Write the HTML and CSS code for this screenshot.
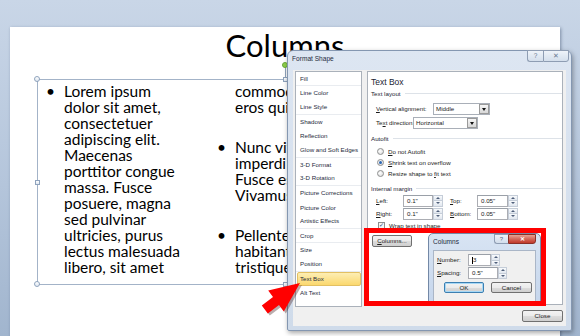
FILE: index.html
```html
<!DOCTYPE html>
<html>
<head>
<meta charset="utf-8">
<title>Columns</title>
<link rel="stylesheet" href="styles.css">
</head>
<body>
<div class="slide">
  <h1 class="title">Columns</h1>
  <div class="textbox">
    <span class="rot-line"></span>
    <span class="h circ rot"></span>
    <span class="h circ tl"></span>
    <span class="h sq ml"></span>
    <span class="h circ bl"></span>
    <span class="h sq tm"></span>
    <span class="h sq bm"></span>
    <div class="cols">
      <div class="col">
        <div class="para"><span class="dot">•</span><span>Lorem ipsum<br>dolor sit amet,<br>consectetuer<br>adipiscing elit.<br>Maecenas<br>porttitor congue<br>massa. Fusce<br>posuere, magna<br>sed pulvinar<br>ultricies, purus<br>lectus malesuada<br>libero, sit amet</span></div>
      </div>
      <div class="col">
        <div class="para nob"><span>commodo<br>eros quis</span></div>
        <div class="para"><span class="dot">•</span><span>Nunc viv<br>imperdi<br>Fusce est<br>Vivamus</span></div>
        <div class="para"><span class="dot">•</span><span>Pellente<br>habitant<br>tristique</span></div>
      </div>
    </div>
  </div>
</div>

<div class="dlg">
  <div class="tbar">
    <span class="tname">Format Shape</span>
    <span class="tbtn help">?</span>
    <span class="tbtn close">✕</span>
  </div>
  <div class="client">
    <div class="list">
      <div class="li sep">Fill</div>
      <div class="li">Line Color</div>
      <div class="li sep">Line Style</div>
      <div class="li">Shadow</div>
      <div class="li">Reflection</div>
      <div class="li sep">Glow and Soft Edges</div>
      <div class="li">3-D Format</div>
      <div class="li sep">3-D Rotation</div>
      <div class="li">Picture Corrections</div>
      <div class="li">Picture Color</div>
      <div class="li sep">Artistic Effects</div>
      <div class="li sep">Crop</div>
      <div class="li">Size</div>
      <div class="li sep">Position</div>
      <div class="li on">Text Box</div>
      <div class="li">Alt Text</div>
    </div>
    <div class="rcol">
      <div class="pane">
        <div class="ph">Text Box</div>
        <div class="grp"><span>Text layout</span><i></i></div>
        <div class="row r14 ind"><span class="lab lw57"><u>V</u>ertical alignment:</span><span class="combo cw57"><span class="cv">Middle</span><span class="dd"></span></span></div>
        <div class="row r14 ind"><span class="lab lw37">Te<u>x</u>t direction:</span><span class="combo cw65"><span class="cv">Horizontal</span><span class="dd"></span></span></div>
        <div class="grp g2"><span>Autofit</span><i></i></div>
        <div class="row r11 rind first"><span class="rad"></span><span class="rl"><u>D</u>o not Autofit</span></div>
        <div class="row r11 rind"><span class="rad on"></span><span class="rl"><u>S</u>hrink text on overflow</span></div>
        <div class="row r11 rind"><span class="rad"></span><span class="rl">Resize shape to <u>f</u>it text</span></div>
        <div class="grp g3"><span>Internal margin</span><i></i></div>
        <div class="row r13 ind first2">
          <span class="lab lw27"><u>L</u>eft:</span><span class="inp iw30">0.1"</span><span class="spin"><i class="up"></i><i class="dn"></i></span>
          <span class="lab lw27 l2"><u>T</u>op:</span><span class="inp iw31">0.05"</span><span class="spin"><i class="up"></i><i class="dn"></i></span>
        </div>
        <div class="row r13 ind">
          <span class="lab lw27"><u>R</u>ight:</span><span class="inp iw30">0.1"</span><span class="spin"><i class="up"></i><i class="dn"></i></span>
          <span class="lab lw27 l2"><u>B</u>ottom:</span><span class="inp iw31">0.05"</span><span class="spin"><i class="up"></i><i class="dn"></i></span>
        </div>
        <div class="row r11 cind"><span class="chk">✓</span><span class="rl"><u>W</u>rap text in shape</span></div>
        <div class="btn colbtn"><u>C</u>olumns...</div>
      </div>
      <div class="foot"><span class="btn closebtn">Close</span></div>
    </div>
  </div>
</div>

<div class="sub">
  <div class="stbar">
    <span class="tname">Columns</span>
    <span class="sbtn help">?</span>
    <span class="sbtn xred">✕</span>
  </div>
  <div class="sclient">
    <div class="row r12"><span class="lab lw31"><u>N</u>umber:</span><span class="inp iw23"><span class="caret"></span>3</span><span class="spin s9"><i class="up"></i><i class="dn"></i></span></div>
    <div class="row r12 sp1"><span class="lab lw31"><u>S</u>pacing:</span><span class="inp iw30">0.5"</span><span class="spin s9"><i class="up"></i><i class="dn"></i></span></div>
    <div class="brow"><span class="btn okbtn">OK</span><span class="btn cbtn">Cancel</span></div>
  </div>
</div>

<div class="redbox"></div>

<svg class="arrow" width="580" height="336" viewBox="0 0 580 336">
  <polygon points="300,283 283.8,311.4 279,305 267.8,313.4 261.8,305.4 273,297 268.2,290.6" fill="rgba(60,20,20,0.35)" transform="translate(2,2)"/>
  <polygon points="300,283 283.8,311.4 279,305 267.8,313.4 261.8,305.4 273,297 268.2,290.6" fill="#ff0000"/>
</svg>
</body>
</html>
```
FILE: styles.css
```css
html, body { margin: 0; padding: 0; }
body {
  width: 580px; height: 336px; overflow: hidden; position: relative;
  box-sizing: border-box; padding: 7px 0 0 10px;
  background: linear-gradient(180deg, #c9d6e7 0%, #b4c5db 55%, #a1b5ce 100%);
  font-family: "Liberation Sans", Arial, sans-serif;
}
u { text-decoration-thickness: 1px; text-underline-offset: 1px; }

/* slide */
.slide {
  width: 550px; height: 310px; background: #fff;
  box-shadow: 1px 1px 3px rgba(40, 60, 90, .45);
}
.title {
  margin: 20px 0 0; height: 36px;
  font: 400 31px/36px Lato, sans-serif; text-align: center; color: #000;
}
.textbox {
  position: relative; margin: 16px 0 0 27px;
  width: 496px; height: 206px; box-sizing: border-box;
  border: 1px solid #a3b3c8; padding: 3px 0 0 8px;
  font: 15.5px/16px Lato, sans-serif; color: #000;
}
.cols { display: grid; grid-template-columns: 171px 1fr; }
.para { display: flex; white-space: nowrap; }
.para + .para { margin-top: 24px; }
.dot { width: 18px; flex: none; }
.nob { padding-left: 18px; }

.h { position: absolute; box-sizing: border-box; border: 1px solid #8fa3bd; background: linear-gradient(#ffffff, #dfe7f1); }
.circ { width: 6px; height: 6px; border-radius: 50%; }
.sq { width: 5px; height: 5px; }
.tl { left: -4px; top: -4px; }
.bl { left: -4px; top: 201px; }
.ml { left: -3.5px; top: 99.5px; }
.tm { left: 244.5px; top: -3.5px; }
.bm { left: 244.5px; top: 201.5px; }
.rot { left: 244px; top: -18px; background: #8ed04a; border-color: #6aa83a; }
.rot-line { position: absolute; left: 246.5px; top: -13px; width: 1px; height: 10px; background: #8fa3bd; }

/* Format Shape dialog */
.dlg {
  position: absolute; left: 287px; top: 50px; width: 285px; height: 281px;
  box-sizing: border-box; border: 1px solid #8497b1; border-radius: 6px 6px 2px 2px;
  background: linear-gradient(180deg, #dde6f2 0%, #cfdbea 100%);
  padding: 0 5px 4px 5px; display: flex; flex-direction: column;
  font-size: 6.2px; line-height: 8px; color: #1b1b1b;
  box-shadow: 1px 2px 5px rgba(0, 0, 0, .35);
}
.tbar { height: 19px; display: flex; align-items: flex-start; margin: 0 -3px 0 -1px; }
.tname { flex: 1; line-height: 16px; font-size: 6.6px; color: #1e2b40; }
.tbtn {
  height: 12px; margin-top: -1px; box-sizing: border-box;
  border: 1px solid #8e9db3; background: linear-gradient(#eef3f9, #d4dfec);
  display: flex; align-items: center; justify-content: center;
  font-size: 6.5px; color: #6a7a91;
}
.tbtn.help { width: 16px; border-radius: 0 0 0 3px; border-right: none; }
.tbtn.close { width: 26px; border-radius: 0 0 3px 0; }

.client {
  flex: 1; background: #f0f0f0; display: flex; gap: 5px;
  padding: 1px 3px 0 2px;
}
.list {
  width: 67px; height: 236px; box-sizing: border-box; flex: none;
  background: #fff; border: 1px solid #aab1ba;
}
.li {
  height: 14.27px; padding-left: 4px; box-sizing: border-box; white-space: nowrap; color: #1e2a3c;
  display: flex; align-items: center; line-height: 8px;
}
.li.sep { border-bottom: 1px solid #e9ecf0; }
.li.on {
  margin: 0 0 0 1px; padding-left: 2px;
  border: 1px solid #e3c062; border-radius: 2px;
  background: linear-gradient(#fdeeb4, #fbd86e);
}
.rcol { width: 196px; display: flex; flex-direction: column; }
.pane {
  height: 234px; box-sizing: border-box; background: #fff;
  border: 1px solid #aab1ba; padding: 3px 0 0 3px;
}
.ph { height: 14px; line-height: 14px; font-size: 8.5px; color: #1b2433; }
.grp { display: flex; align-items: center; height: 9px; line-height: 8px; color: #1b2433; }
.grp i { flex: 1; height: 1px; background: #dde2e8; margin-left: 4px; }
.g2 { margin-top: 4px; }
.g3 { margin-top: 5px; }
.row { display: flex; align-items: center; white-space: nowrap; }
.r14 { height: 14px; }
.r13 { height: 13px; }
.r12 { height: 12px; }
.r11 { height: 11px; }
.ind { padding-left: 5px; }
.ph + .grp + .row { margin-top: 4px; }
.first { margin-top: 3px; }
.first2 { margin-top: 1px; }
.rind { padding-left: 6px; }
.cind { padding-left: 7px; }
.lab { flex: none; }
.lw57 { width: 57px; }
.lw37 { width: 37px; }
.lw27 { width: 27px; }
.lw31 { width: 31px; }
.l2 { margin-left: 7px; }
.combo {
  height: 12px; box-sizing: border-box; display: flex; align-items: center;
  border: 1px solid #a9afb8; background: #fff;
}
.cw57 { width: 57px; }
.cw65 { width: 65px; }
.cv { flex: 1; padding-left: 2px; }
.dd {
  width: 10px; height: 10px; box-sizing: border-box; margin-right: 0;
  border: 1px solid #9a9a9a; background: linear-gradient(#f6f6f6, #d7d7d7);
  display: flex; align-items: center; justify-content: center;
}
.dd::after { content: ""; border-left: 2.5px solid transparent; border-right: 2.5px solid transparent; border-top: 3px solid #111; }
.rad {
  width: 7px; height: 7px; box-sizing: border-box; border-radius: 50%;
  border: 1px solid #8e8f8f; background: radial-gradient(circle at 40% 40%, #ffffff, #d6d6d6);
  display: flex; align-items: center; justify-content: center; flex: none;
}
.rad.on::after { content: ""; width: 3px; height: 3px; border-radius: 50%; background: #2b67b4; }
.rl { margin-left: 4px; }
.chk {
  width: 7px; height: 7px; box-sizing: border-box; border: 1px solid #8e8f8f;
  background: #f6f6f6; font-size: 6px; line-height: 5px; text-align: center; color: #22437a; flex: none;
}
.inp {
  height: 12px; box-sizing: border-box; border: 1px solid #abadb3; border-top-color: #9aa0a8;
  background: #fff; padding-left: 3px; display: flex; align-items: center; flex: none;
}
.iw30 { width: 30px; }
.iw31 { width: 31px; }
.iw23 { width: 23px; }
.caret { width: 1px; height: 7px; background: #000; margin-right: 0; }
.spin { display: flex; flex-direction: column; width: 10px; height: 12px; flex: none; }
.spin.s9 { width: 9px; }
.spin i {
  flex: 1; box-sizing: border-box; border: 1px solid #c5cdd8;
  background: linear-gradient(#f8fafc, #e1e7ef);
  display: flex; align-items: center; justify-content: center;
}
.spin i + i { border-top: none; }
.spin i::after { content: ""; border-left: 2px solid transparent; border-right: 2px solid transparent; }
.spin .up::after { border-bottom: 2px solid #4f5f7a; }
.spin .dn::after { border-top: 2px solid #4f5f7a; }
.btn {
  box-sizing: border-box; border: 1px solid #707070; border-radius: 2px;
  background: linear-gradient(#f3f3f3 0%, #ebebeb 50%, #dddddd 51%, #cfcfcf 100%);
  display: flex; align-items: center; justify-content: center; color: #1b1b1b;
}
.colbtn { width: 40px; height: 12px; margin: 4px 0 0 1px; }
.foot { display: flex; justify-content: flex-end; margin-top: 5px; }
.closebtn { width: 41px; height: 12px; }

/* Columns sub-dialog */
.sub {
  position: absolute; left: 428px; top: 233px; width: 113px; height: 70px;
  box-sizing: border-box; border: 1px solid #7388a6; border-radius: 5px 5px 0 0;
  background: linear-gradient(180deg, #d8e4f3 0%, #c6d6ec 100%);
  padding: 0 4px 0 4px; display: flex; flex-direction: column;
  font-size: 6.2px; line-height: 8px; color: #1b1b1b;
}
.stbar { height: 16px; display: flex; align-items: flex-start; }
.sbtn {
  height: 10px; box-sizing: border-box; display: flex; align-items: center; justify-content: center;
  font-size: 6px;
}
.sbtn.help { width: 14px; border: 1px solid #8e9db3; border-right: none; border-radius: 0 0 0 3px; background: linear-gradient(#eef3f9, #d2ddeb); color: #55657c; }
.sbtn.xred { width: 28px; border: 1px solid #8a2f27; border-radius: 0 0 3px 0; background: linear-gradient(#e8a394 0%, #d4685a 50%, #c0392b 100%); color: #fff; font-weight: bold; }
.sclient {
  flex: 1; background: #f0f0f0; border: 1px solid #aab6c7; border-bottom: none;
  padding: 3px 0 0 3px;
}
.sp1 { margin-top: 1px; }
.brow { display: flex; gap: 7px; margin: 3px 0 0 7px; }
.okbtn { width: 40px; height: 11px; border-color: #3c7fb1; box-shadow: inset 0 0 0 1px #a6d8f6; }
.cbtn { width: 41px; height: 11px; }

/* annotations */
.redbox {
  position: absolute; left: 364px; top: 228px; width: 182px; height: 78px;
  box-sizing: border-box; border: 5px solid #ff0000;
}
.arrow { position: absolute; left: 0; top: 0; pointer-events: none; }
```
